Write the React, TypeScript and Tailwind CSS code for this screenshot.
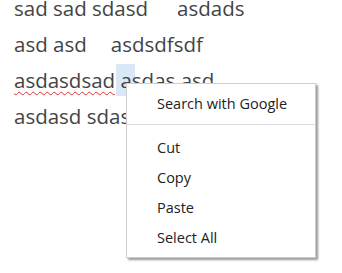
import React from 'react';

const ITEMS = ['Cut', 'Copy', 'Paste', 'Select All'];

export default function App() {
    return (
        <div className="relative w-[342px] h-[273px] overflow-hidden bg-white text-[#444] font-['Open_Sans',sans-serif]">
            {/* Editor text */}
            <div className="pl-[14px] text-[20.5px] leading-[36px] whitespace-nowrap">
                <div className="leading-[16px] mb-[10px]">sad sad sdasd<span className="inline-block w-[29px]"></span>asdads</div>
                <div>asd asd<span className="inline-block w-[24px]"></span>asdsdfsdf</div>
                <div>
                    <span className="underline decoration-wavy decoration-[#e03030] decoration-1 underline-offset-[3px]">asdasdsad</span>{' '}
                    <span className="bg-[#d9e8f7] pl-[4px] pr-[3px] -ml-[4px] -mr-[3px] py-[2px]">a</span>sdas asd
                </div>
                <div>asdasd sdasd</div>
            </div>

            {/* Context menu */}
            <div className="absolute left-[126px] top-[83px] w-[190px] bg-white border border-[#cfcfcf] shadow-[2px_2px_2px_rgba(0,0,0,0.4)] pt-[5px] pb-[4px] text-[14.5px] text-[#222]">
                <div className="h-[30px] flex items-center pl-[30px]">Search with Google</div>
                <div className="mt-[5px] mb-[8px] h-px bg-[#dcdcdc]"></div>
                {ITEMS.map(item => (
                    <div key={item} className="h-[30px] flex items-center pl-[30px]">{item}</div>
                ))}
            </div>
        </div>
    );
}
